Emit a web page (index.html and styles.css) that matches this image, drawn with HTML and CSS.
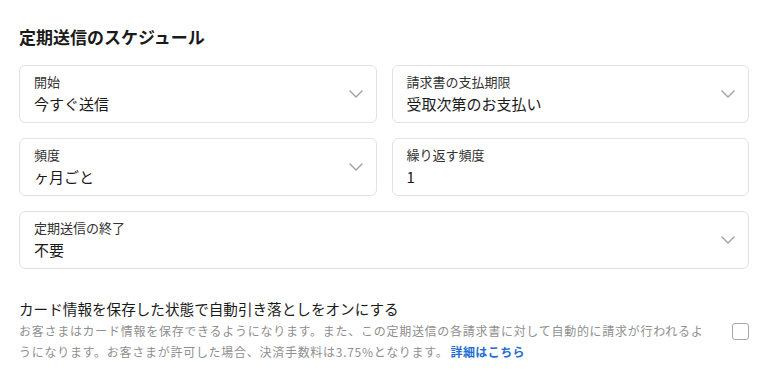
FILE: index.html
```html
<!DOCTYPE html>
<html lang="ja">
<head>
<meta charset="utf-8">
<link rel="stylesheet" href="styles.css">
</head>
<body>
<div class="page">
  <h2 class="title">定期送信のスケジュール</h2>
  <div class="grid">
    <div class="field">
      <div class="text"><div class="label">開始</div><div class="value">今すぐ送信</div></div>
      <svg class="chev" width="14" height="8" viewBox="0 0 14 8"><path d="M1 1l6 6 6-6" fill="none" stroke="#a0a0a0" stroke-width="1.4" stroke-linecap="round" stroke-linejoin="round"/></svg>
    </div>
    <div class="field">
      <div class="text"><div class="label">請求書の支払期限</div><div class="value">受取次第のお支払い</div></div>
      <svg class="chev" width="14" height="8" viewBox="0 0 14 8"><path d="M1 1l6 6 6-6" fill="none" stroke="#a0a0a0" stroke-width="1.4" stroke-linecap="round" stroke-linejoin="round"/></svg>
    </div>
    <div class="field">
      <div class="text"><div class="label">頻度</div><div class="value">ヶ月ごと</div></div>
      <svg class="chev" width="14" height="8" viewBox="0 0 14 8"><path d="M1 1l6 6 6-6" fill="none" stroke="#a0a0a0" stroke-width="1.4" stroke-linecap="round" stroke-linejoin="round"/></svg>
    </div>
    <div class="field">
      <div class="text"><div class="label">繰り返す頻度</div><div class="value">1</div></div>
    </div>
    <div class="field wide">
      <div class="text"><div class="label">定期送信の終了</div><div class="value">不要</div></div>
      <svg class="chev" width="14" height="8" viewBox="0 0 14 8"><path d="M1 1l6 6 6-6" fill="none" stroke="#a0a0a0" stroke-width="1.4" stroke-linecap="round" stroke-linejoin="round"/></svg>
    </div>
  </div>
  <div class="option">
    <div class="opt-text">
      <div class="opt-head">カード情報を保存した状態で自動引き落としをオンにする</div>
      <p class="opt-desc">お客さまはカード情報を保存できるようになります。また、この定期送信の各請求書に対して自動的に請求が行われるようになります。お客さまが許可した場合、決済手数料は3.75%となります。<a class="link" href="#">詳細はこちら</a></p>
    </div>
    <span class="checkbox"></span>
  </div>
</div>
</body>
</html>
```

FILE: styles.css
```css
* { box-sizing: border-box; }
body {
  margin: 0;
  background: #ffffff;
  font-family: "Noto Sans CJK JP", "Noto Sans", sans-serif;
  color: #1a1a1a;
}
.page {
  padding: 25px 19px 0 19px;
}
.title {
  margin: 0 0 16px 0;
  font-size: 17px;
  line-height: 24px;
  font-weight: 700;
  color: #1a1a1a;
}
.grid {
  display: grid;
  grid-template-columns: 1fr 1fr;
  gap: 15px;
}
.field {
  height: 58px;
  border: 1px solid #e2e2e2;
  border-radius: 6px;
  padding: 6px 14px 0 14px;
  display: flex;
  align-items: center;
  justify-content: space-between;
}
.field .text { align-self: flex-start; }
.wide { grid-column: 1 / 3; }
.label {
  font-size: 13px;
  line-height: 19px;
  color: #333;
}
.value {
  font-size: 15px;
  line-height: 26px;
  color: #1a1a1a;
}
.chev { margin-right: -1px; margin-top: -6px; }
.option {
  margin-top: 29px;
  display: flex;
  align-items: center;
  gap: 18px;
}
.opt-text { flex: 1; }
.opt-head {
  font-size: 14.6px;
  line-height: 22px;
  color: #1a1a1a;
}
.opt-desc {
  margin: 0;
  font-size: 12px;
  letter-spacing: 0.72px;
  line-height: 21px;
  color: #8f8f8f;
}
.link {
  margin-left: 2px;
  color: #1f6fd1;
  font-weight: 700;
  text-decoration: none;
  letter-spacing: 0.4px;
}
.checkbox {
  width: 17px;
  height: 17px;
  border: 1.5px solid #a8a8a8;
  border-radius: 3px;
  flex: none;
  margin-top: 2px;
}
```
